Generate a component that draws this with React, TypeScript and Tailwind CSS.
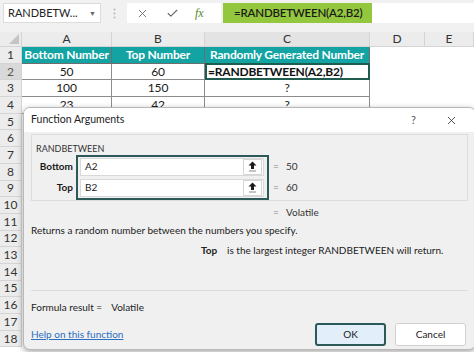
import { X, Check } from 'lucide-react';

const cols = [
    { key: 'A', w: 'w-[90px]' },
    { key: 'B', w: 'w-[93px]' },
    { key: 'C', w: 'w-[165px]' },
    { key: 'D', w: 'w-[55px]' },
    { key: 'E', w: 'w-[49px]' },
];

const tableRows = [
    ['Bottom Number', 'Top Number', 'Randomly Generated Number'],
    ['50', '60', '=RANDBETWEEN(A2,B2)'],
    ['100', '150', '?'],
    ['23', '42', '?'],
];

function RefButton() {
    return (
        <div className="w-[19px] h-[16px] bg-white border border-[#d6d6d6] flex items-center justify-center">
            <svg width="9" height="11" viewBox="0 0 9 11">
                <path d="M4.5 0.5 L8.5 4.5 L6 4.5 L6 8 L3 8 L3 4.5 L0.5 4.5 Z" fill="#1c1c1c" />
                <rect x="1" y="9.5" width="7" height="1" fill="#8a8a8a" />
            </svg>
        </div>
    );
}

function ArgRow({ label, value, result }: { label: string; value: string; result: string }) {
    return (
        <div className="flex items-center h-[21px]">
            <div className="w-[41px] text-right font-bold text-[10px] text-[#1a1a1a] whitespace-nowrap">{label}</div>
            <div className="ml-[7px] w-[184px] h-[18px] bg-white border border-[#d9d9d9] flex items-center justify-between pl-[4px] pr-[1px]">
                <span className="text-[10px] text-[#1a1a1a]">{value}</span>
                <RefButton />
            </div>
            <div className="flex items-center text-[10px] text-[#333] ml-[9px] whitespace-nowrap">
                <span className="w-[13px] text-[#888]">=</span>
                <span>{result}</span>
            </div>
        </div>
    );
}

export default function App() {
    return (
        <div className="relative w-[474px] h-[352px] overflow-hidden bg-white" style={{ fontFamily: 'Lato, sans-serif' }}>
            {/* Formula bar */}
            <div className="h-[32px] bg-[#f1f1f1] flex items-start pt-[3px]">
                <div className="ml-[3px] w-[98px] h-[20px] bg-white border border-[#dcdcdc] flex items-center justify-between px-[4px] text-[11px] text-[#222] whitespace-nowrap">
                    <span>RANDBETW...</span>
                    <span className="text-[7px] text-[#666]">▼</span>
                </div>
                <div className="w-[26px] h-[20px] flex items-center justify-center">
                    <svg width="3" height="11" viewBox="0 0 3 11">
                        <circle cx="1.5" cy="1.5" r="1" fill="#b5b5b5" />
                        <circle cx="1.5" cy="5.5" r="1" fill="#b5b5b5" />
                        <circle cx="1.5" cy="9.5" r="1" fill="#b5b5b5" />
                    </svg>
                </div>
                <div className="w-[94px] h-[20px] bg-white flex items-center">
                    <X className="ml-[9px] w-[13px] h-[13px] text-[#666]" strokeWidth={1.6} />
                    <Check className="ml-[17px] w-[13px] h-[13px] text-[#666]" strokeWidth={2} />
                    <span className="ml-[16px] text-[12px] italic text-[#4f8a2a]" style={{ fontFamily: '"Liberation Serif", serif' }}>fx</span>
                </div>
                <div className="ml-[2px] w-[149px] h-[20px] bg-[#93c83e] flex items-center pl-[11px] text-[11.5px] font-semibold tracking-[-0.2px] text-[#1a1a1a] whitespace-nowrap">
                    =RANDBETWEEN(A2,B2)
                </div>
                <div className="flex-1 h-[20px] bg-white" />
            </div>

            {/* Column headers */}
            <div className="flex h-[15px] bg-[#ececec] border-b border-[#d4d4d4]">
                <div className="w-[22px] h-full relative border-r border-[#d4d4d4]">
                    <div className="absolute right-[2px] bottom-[2px] w-0 h-0 border-l-[10px] border-l-transparent border-b-[10px] border-b-[#c4c4c4]" />
                </div>
                {cols.map((c) => (
                    <div key={c.key} className={`${c.w} shrink-0 h-full flex items-center justify-center text-[12px] text-[#333] border-r border-[#d4d4d4] ${c.key === 'C' ? 'bg-[#e3e3e3]' : ''}`}>
                        {c.key}
                    </div>
                ))}
            </div>

            {/* Rows */}
            {Array.from({ length: 18 }, (_, i) => {
                const r = i + 1;
                const data = tableRows[i];
                return (
                    <div key={r} className="flex h-[16.7px]">
                        <div className={`w-[22px] shrink-0 flex items-center justify-center text-[12px] border-r border-b border-[#d4d4d4] ${r === 2 ? 'bg-[#d9d9d9] text-[#555]' : 'bg-[#ececec] text-[#333]'}`}>
                            {r}
                        </div>
                        {cols.map((c, ci) => {
                            const inTable = data && ci < 3;
                            const header = r === 1 && ci < 3;
                            const active = r === 2 && ci === 2;
                            let cls = 'border-r border-b border-transparent';
                            if (header) cls = 'bg-[#14a3a3] text-white font-bold border-r border-b border-[#6d6d6d]';
                            else if (inTable) cls = 'text-[#1a1a1a] border-r border-b border-[#8c8c8c]';
                            if (active) cls = 'text-[#111] font-bold border-2 border-[#1f5b4f] -mt-[1px]';
                            return (
                                <div
                                    key={c.key}
                                    className={`${c.w} shrink-0 flex items-center whitespace-nowrap overflow-hidden text-[12px] tracking-[-0.2px] ${active ? 'justify-start pl-[1px]' : 'justify-center'} ${cls}`}
                                >
                                    {inTable ? data[ci] : ''}
                                </div>
                            );
                        })}
                    </div>
                );
            })}

            {/* Function Arguments dialog */}
            <div className="absolute left-[23px] top-[107px] w-[453px] h-[243px] rounded-[7px] border border-[#b8b8b8] bg-[#f0f0f0] overflow-hidden shadow-[0_2px_6px_rgba(0,0,0,0.35)] flex flex-col">
                <div className="h-[24px] bg-white flex items-center justify-between pl-[7px] pr-[17px] text-[10.5px] text-[#222]">
                    <span>Function Arguments</span>
                    <div className="flex items-center gap-[29px]">
                        <span className="text-[11px] text-[#555]">?</span>
                        <X className="w-[13px] h-[13px] text-[#333]" strokeWidth={1.5} />
                    </div>
                </div>

                <div className="mx-[7px] mt-[2px] h-[67px] border border-[#dcdcdc] flex flex-col">
                    <div className="pl-[4px] pt-[7px] h-[20px] text-[9px] text-[#333]">RANDBETWEEN</div>
                    <div className="relative pt-[1px]">
                        <div className="absolute left-[44px] top-[0px] w-[193px] h-[45px] border-2 border-[#2c5a58]" />
                        <ArgRow label="Bottom" value="A2" result="50" />
                        <ArgRow label="Top" value="B2" result="60" />
                    </div>
                </div>

                <div className="h-[22px] flex items-center pl-[249px] text-[10px] text-[#333] whitespace-nowrap">
                    <span className="w-[13px] text-[#888]">=</span>
                    <span>Volatile</span>
                </div>
                <div className="h-[14px] flex items-center pl-[7px] text-[10px] text-[#222] whitespace-nowrap">
                    Returns a random number between the numbers you specify.
                </div>
                <div className="h-[27px] flex items-center pl-[177px] text-[10px] text-[#222] whitespace-nowrap">
                    <span className="font-bold w-[26px]">Top</span>
                    <span>is the largest integer RANDBETWEEN will return.</span>
                </div>
                <div className="h-[27px] mx-[7px] border-b border-[#dcdcdc]" />
                <div className="h-[32px] flex items-center pl-[7px] text-[10px] text-[#222] whitespace-nowrap">
                    <span>Formula result =</span>
                    <span className="ml-[9px]">Volatile</span>
                </div>
                <div className="flex items-center justify-between pl-[7px] pr-[9px]">
                    <span className="text-[10px] text-[#2a6fc0] underline">Help on this function</span>
                    <div className="flex gap-[9px]">
                        <div className="w-[71px] h-[23px] bg-[#e2eef9] border-2 border-[#2c5a58] rounded-[3px] flex items-center justify-center text-[10px] text-[#1a1a1a]">OK</div>
                        <div className="w-[71px] h-[23px] bg-white border border-[#d0d0d0] rounded-[3px] flex items-center justify-center text-[10px] text-[#1a1a1a]">Cancel</div>
                    </div>
                </div>
            </div>
        </div>
    );
}
